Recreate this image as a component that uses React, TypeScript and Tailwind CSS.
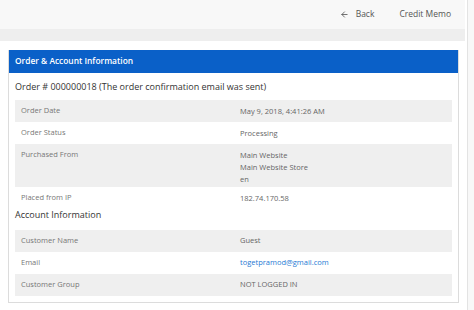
import { ArrowLeft } from "lucide-react";

const orderRows = [
  { label: "Order Date", value: ["May 9, 2018, 4:41:26 AM"], shade: true },
  { label: "Order Status", value: ["Processing"], shade: false },
  { label: "Purchased From", value: ["Main Website", "Main Website Store", "en"], shade: true },
  { label: "Placed from IP", value: ["182.74.170.58"], shade: false }
];

const accountRows = [
  { label: "Customer Name", value: "Guest", shade: true, link: false },
  { label: "Email", value: "togetpramod@gmail.com", shade: false, link: true },
  { label: "Customer Group", value: "NOT LOGGED IN", shade: true, link: false }
];

export default function App() {
  return (
    <main className="flex h-[310px] w-[474px] overflow-hidden bg-white text-[#333] font-['Open_Sans',sans-serif]">
      <section className="w-[465px] shrink-0">
        <header className="flex h-[29px] items-center justify-end gap-[25px] bg-[#f8f8f8] pr-[14px] text-[8.5px] text-[#555]">
          <span className="flex items-center gap-[7px]">
            <ArrowLeft size={9} strokeWidth={2.2} />
            Back
          </span>
          <span>Credit Memo</span>
        </header>
        <div className="h-[12px] bg-[#eeeeee]" />
        <div className="px-[8px] pt-[9px]">
          <div className="w-[451px] border border-t-0 border-[#dcdcdc] pb-[6px]">
            <div className="flex h-[23px] items-center bg-[#0a60c8] px-[6px] text-[8.4px] font-semibold text-white">
              Order &amp; Account Information
            </div>
            <div className="px-[6px]">
              <p className="flex h-[27px] items-center text-[9px] text-[#333]">
                Order # 000000018 (The order confirmation email was sent)
              </p>
              <div className="text-[7.5px] text-[#777]">
                {orderRows.map((row) => (
                  <div key={row.label} className={`flex ${row.shade ? "bg-[#efefef]" : ""} ${row.value.length > 1 ? "min-h-[43px] pt-[5px]" : "h-[22px] items-center"}`}>
                    <div className="w-[225px] pl-[6px] text-[#777]">{row.label}</div>
                    <div className="leading-[12px] text-[#666]">
                      {row.value.map((line) => (
                        <div key={line}>{line}</div>
                      ))}
                    </div>
                  </div>
                ))}
              </div>
              <p className="h-[21px] text-[9px] leading-[12px] text-[#333]">Account Information</p>
              <div className="text-[7.5px] text-[#777]">
                {accountRows.map((row) => (
                  <div key={row.label} className={`flex h-[22px] items-center ${row.shade ? "bg-[#efefef]" : ""}`}>
                    <div className="w-[225px] pl-[6px] text-[#777]">{row.label}</div>
                    <div className={row.link ? "text-[#1f7ad4]" : "text-[#666]"}>{row.value}</div>
                  </div>
                ))}
              </div>
            </div>
          </div>
        </div>
      </section>
      <div className="w-[2px] shrink-0" />
      <div className="w-[1px] shrink-0 bg-[#e3e3e3]" />
      <div className="flex-1 bg-[#f8f8f8]" />
    </main>
  );
}
